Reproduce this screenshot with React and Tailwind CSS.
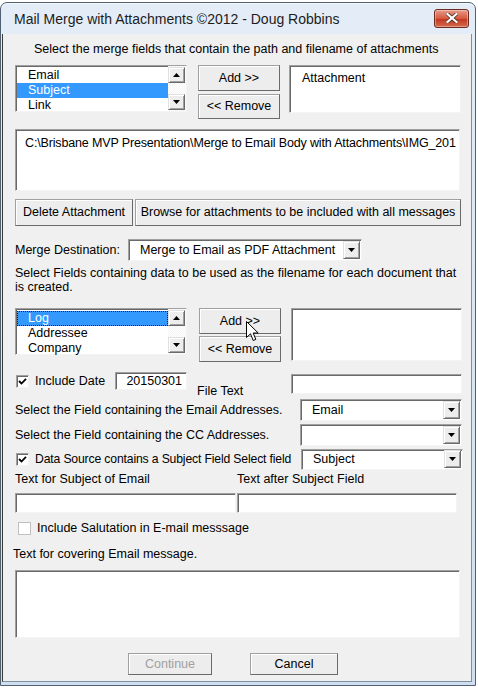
import React from "react";

const btn =
  "bg-[#ededed] border border-[#a0a0a0] border-r-[#6a6a6a] border-b-[#6a6a6a] shadow-[inset_1px_1px_0_#ffffff] flex items-center justify-center text-[12.5px] whitespace-nowrap";
const sunken =
  "bg-white border border-t-[#a0a0a0] border-l-[#a0a0a0] border-r-[#f4f4f4] border-b-[#f4f4f4] shadow-[inset_1px_1px_0_#696969]";

function Arrow({ up }) {
  return (
    <svg width="7" height="4" viewBox="0 0 7 4">
      {up ? <polygon points="0,4 7,4 3.5,0" fill="#000" /> : <polygon points="0,0 7,0 3.5,4" fill="#000" />}
    </svg>
  );
}

function SmallBtn({ up, className = "" }) {
  return (
    <div
      className={
        "w-[17px] h-[16px] bg-[#ededed] border border-[#e0e0e0] border-r-[#6a6a6a] border-b-[#6a6a6a] shadow-[inset_1px_1px_0_#ffffff,inset_-1px_-1px_0_#a0a0a0] flex items-center justify-center " +
        className
      }
    >
      <Arrow up={up} />
    </div>
  );
}

function ListBox({ items, selected, focus }) {
  return (
    <div className={"w-[172px] h-[47px] flex " + sunken}>
      <div className="flex-1 flex flex-col pt-[2px] pl-[1px]">
        {items.map((it, i) => (
          <div
            key={it}
            className={
              "h-[15px] leading-[15px] pl-[11px] text-[12.5px] " +
              (i === selected ? "bg-[#3399ff] text-white " : "text-black ") +
              (focus && i === selected ? "outline outline-1 outline-dotted outline-[#1a1a1a] -outline-offset-1" : "")
            }
          >
            {it}
          </div>
        ))}
      </div>
      <div className="w-[18px] flex flex-col justify-between py-[1px] pr-[1px] bg-[repeating-conic-gradient(#f4f4f4_0%_25%,#ffffff_0%_50%)] bg-[length:2px_2px]">
        <SmallBtn up />
        <SmallBtn />
      </div>
    </div>
  );
}

function Check({ checked, className = "" }) {
  return (
    <div className={"w-[13px] h-[13px] flex items-center justify-center shrink-0 " + sunken + " " + className}>
      {checked && (
        <svg width="9" height="9" viewBox="0 0 9 9">
          <polyline points="1,4 3.5,6.5 8,1.8" fill="none" stroke="#000" strokeWidth="1.8" />
        </svg>
      )}
    </div>
  );
}

function Combo({ text, className = "" }) {
  return (
    <div className={"flex items-center shrink-0 " + sunken + " " + className}>
      <div className="flex-1 pl-[11px] text-[12.5px] text-black truncate">{text}</div>
      <SmallBtn className="mr-[1px] h-[18px]" />
    </div>
  );
}

export default function App() {
  return (
    <div className="w-[478px] h-[691px] bg-white overflow-hidden pt-[2px] font-['Liberation_Sans',Arial,sans-serif] text-[12.5px] text-black relative">
      <div className="w-[476px] h-[684px] rounded-t-[7px] border border-[#51606f] bg-[linear-gradient(#e4edf7,#cfdef0)] flex flex-col shadow-[inset_0_1px_0_#f5f9fd]">
        {/* Title bar */}
        <div className="h-[31px] flex items-center justify-between pl-[13px] pr-[6px] shrink-0">
          <div className="text-[14px] text-[#1c1c1c] pt-[1px]">
            Mail Merge with Attachments ©2012 - Doug Robbins
          </div>
          <div className="w-[35px] h-[19px] mb-[1px] rounded-[3px] border border-[#6b2b22] bg-[linear-gradient(#e79b8a,#d6593f_50%,#c13a22_55%,#d56a4c)] shadow-[inset_0_0_0_1px_rgba(255,255,255,0.35)] flex items-center justify-center">
            <svg width="12" height="10" viewBox="0 0 12 10">
              <path d="M1.5 1 L10.5 9 M10.5 1 L1.5 9" stroke="#3b1f1b" strokeWidth="3.6" strokeLinecap="square" />
              <path d="M1.5 1 L10.5 9 M10.5 1 L1.5 9" stroke="#ffffff" strokeWidth="2.2" strokeLinecap="square" />
            </svg>
          </div>
        </div>

        {/* Client area */}
        <div className="flex-1 mr-[3px] mb-[3px] ml-[1px] bg-[#f0f0f0] border border-t-0 border-[#7f8fa0] border-l-[#3a3a3a] flex flex-col pl-[12px] relative">
          <div className="mt-[8px] h-[14px] leading-[14px] pl-[19px] whitespace-nowrap">
            Select the merge fields that contain the path and filename of attachments
          </div>

          {/* Row A */}
          <div className="mt-[9px] h-[54px] flex">
            <ListBox items={["Email", "Subject", "Link"]} selected={1} />
            <div className="ml-[11px] w-[82px] flex flex-col">
              <div className={btn + " h-[26px]"}>Add &gt;&gt;</div>
              <div className={btn + " h-[25px] mt-[3px]"}>&lt;&lt; Remove</div>
            </div>
            <div className={"ml-[9px] w-[172px] h-[48px] pl-[12px] pt-[3px] " + sunken}>Attachment</div>
          </div>

          {/* Big textbox */}
          <div className={"mt-[10px] w-[445px] h-[62px] pl-[9px] pt-[4px] whitespace-nowrap tracking-[-0.15px] " + sunken}>
            C:\Brisbane MVP Presentation\Merge to Email Body with Attachments\IMG_201
          </div>

          {/* Buttons */}
          <div className="mt-[8px] h-[27px] flex">
            <div className={btn + " w-[118px]"}>Delete Attachment</div>
            <div className={btn + " w-[326px] ml-[2px]"}>Browse for attachments to be included with all messages</div>
          </div>

          {/* Merge destination */}
          <div className="mt-[13px] h-[22px] flex items-center">
            <div className="w-[113px] whitespace-nowrap">Merge Destination:</div>
            <Combo text="Merge to Email as PDF Attachment" className="w-[234px] h-[22px]" />
          </div>

          <div className="mt-[5px] leading-[14px] flex flex-col">
            <div className="whitespace-nowrap">Select Fields containing data to be used as the filename for each document that</div>
            <div className="whitespace-nowrap">is created.</div>
          </div>

          {/* Row B */}
          <div className="mt-[14px] h-[54px] flex">
            <ListBox items={["Log", "Addressee", "Company"]} selected={0} focus />
            <div className="ml-[12px] w-[82px] flex flex-col">
              <div className={btn + " h-[26px]"}>Add &gt;&gt;</div>
              <div className={btn + " h-[26px] mt-[2px]"}>&lt;&lt; Remove</div>
            </div>
            <div className={"ml-[10px] w-[171px] h-[53px] " + sunken}></div>
          </div>

          {/* Include date */}
          <div className="mt-[10px] h-[22px] flex items-start">
            <div className="h-[18px] flex items-center">
              <Check checked className="ml-[1px]" />
              <div className="ml-[6px] w-[80px] whitespace-nowrap">Include Date</div>
            </div>
            <div className={"w-[72px] h-[18px] flex items-center justify-end pr-[4px] " + sunken}>20150301</div>
            <div className="ml-[10px] mt-[10px] w-[94px] whitespace-nowrap">File Text</div>
            <div className={"w-[171px] h-[20px] mt-[2px] " + sunken}></div>
          </div>

          {/* Email */}
          <div className="mt-[5px] h-[22px] flex items-center">
            <div className="w-[285px] whitespace-nowrap">Select the Field containing the Email Addresses.</div>
            <Combo text="Email" className="w-[162px] h-[22px]" />
          </div>

          {/* CC */}
          <div className="mt-[3px] h-[22px] flex items-center">
            <div className="w-[285px] whitespace-nowrap">Select the Field containing the CC Addresses.</div>
            <Combo text="" className="w-[162px] h-[22px]" />
          </div>

          {/* Subject */}
          <div className="mt-[3px] h-[20px] flex items-center">
            <Check checked className="ml-[1px]" />
            <div className="ml-[6px] w-[266px] whitespace-nowrap tracking-[-0.15px] text-[12.2px]">
              Data Source contains a Subject Field Select field
            </div>
            <Combo text="Subject" className="w-[162px] h-[21px]" />
          </div>

          {/* Labels */}
          <div className="mt-[3px] h-[14px] leading-[14px] flex">
            <div className="w-[222px] whitespace-nowrap">Text for Subject of Email</div>
            <div className="whitespace-nowrap">Text after Subject Field</div>
          </div>

          <div className="mt-[7px] h-[20px] flex">
            <div className={"w-[221px] h-[20px] " + sunken}></div>
            <div className={"w-[220px] h-[20px] ml-[1px] " + sunken}></div>
          </div>

          {/* Salutation */}
          <div className="mt-[9px] h-[13px] flex items-center">
            <div className="w-[13px] h-[13px] ml-[3px] bg-white border border-[#c0c0c0]"></div>
            <div className="ml-[6px] whitespace-nowrap">Include Salutation in E-mail messsage</div>
          </div>

          <div className="mt-[12px] h-[14px] leading-[14px] -ml-[2px] whitespace-nowrap">Text for covering Email message.</div>

          <div className={"mt-[9px] w-[445px] h-[68px] " + sunken}></div>

          <div className="mt-[15px] h-[22px] flex">
            <div className={btn + " ml-[113px] w-[84px] text-[#a0a0a0]"}>Continue</div>
            <div className={btn + " ml-[38px] w-[88px] text-black"}>Cancel</div>
          </div>

          {/* mouse cursor */}
          <svg className="absolute left-[243px] top-[287px]" width="13" height="21" viewBox="0 0 13 21">
            <path
              d="M0.5 0.5 L0.5 16.5 L4.5 12.8 L7.2 19.5 L9.8 18.4 L7.2 12 L12.2 12 Z"
              fill="#ffffff"
              stroke="#000000"
              strokeWidth="1"
              strokeLinejoin="miter"
            />
          </svg>
        </div>
      </div>
    </div>
  );
}
